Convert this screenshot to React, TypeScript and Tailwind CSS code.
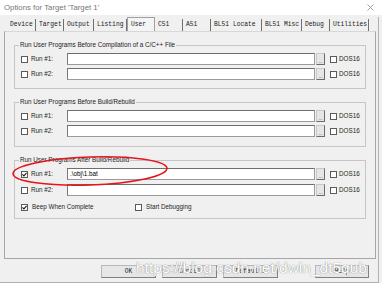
import React from "react";

const sans = "font-['Liberation_Sans',Arial,sans-serif]";
const mono = "font-['Liberation_Mono','Courier_New',monospace]";

const Check = ({ on = false }: { on?: boolean }) => (
  <span className="w-[7px] h-[7px] shrink-0 border border-[#5a5a5a] bg-white flex items-center justify-center">
    {on && (
      <svg width="5" height="5" viewBox="0 0 5 5">
        <path d="M0.4 2.4 L1.9 3.9 L4.6 0.9" fill="none" stroke="#1a1a1a" strokeWidth="1.1" />
      </svg>
    )}
  </span>
);

const RunRow = ({ n, value = "", checked = false }: { n: number; value?: string; checked?: boolean }) => (
  <div className="flex items-center h-[12px] pl-[6px]">
    <Check on={checked} />
    <span className="ml-[3px] w-[36px]">Run #{n}:</span>
    <div className="w-[248px] h-[12px] bg-white border border-[#9a9a9a] border-t-[#6e6e6e] border-l-[#7a7a7a] flex items-center pl-[2px] text-black">
      {value}
    </div>
    <div className="ml-[1px] w-[9px] h-[12px] bg-[#e6e6e6] border border-[#c8c8c8] border-r-[#6a6a6a] border-b-[#6a6a6a] flex items-end justify-center text-[5px] leading-[6px] text-[#333]">
      ...
    </div>
    <span className="ml-[5px]">
      <Check />
    </span>
    <span className="ml-[2px]">DOS16</span>
  </div>
);

const Group = ({ title, children, className }: { title: string; children: React.ReactNode; className: string }) => (
  <fieldset className={`border border-[#c6c6c6] mx-[9px] pt-[4px] ${className}`}>
    <legend className="ml-[4px] px-[1px] leading-[8px] text-[#222]">{title}</legend>
    {children}
  </fieldset>
);

const tabs = [
  { label: "Device", w: "w-[32px] pl-[6px]" },
  { label: "Target", w: "w-[28px] pl-[3px]" },
  { label: "Output", w: "w-[30px] pl-[3px]" },
  { label: "Listing", w: "w-[33px] pl-[3px]" },
  { label: "User", w: "w-[28px] pl-[3px]", active: true },
  { label: "C51", w: "w-[28px] pl-[3px]" },
  { label: "A51", w: "w-[28px] pl-[3px]" },
  { label: "BL51 Locate", w: "w-[51px] pl-[3px]" },
  { label: "BL51 Misc", w: "w-[40px] pl-[3px]" },
  { label: "Debug", w: "w-[28px] pl-[3px]" },
  { label: "Utilities", w: "w-[39px] pl-[3px]" },
];

const Btn = ({ label, className }: { label: string; className: string }) => (
  <div
    className={`h-[13px] bg-[#e6e6e6] border border-[#b8b8b8] border-r-[#808080] border-b-[#808080] flex items-center justify-center ${mono} text-[6.3px] text-[#222] ${className}`}
  >
    {label}
  </div>
);

export default function App() {
  return (
    <div className={`relative w-[382px] h-[283px] overflow-hidden bg-[#f0f0f0] ${sans} text-[6.3px] text-[#1e1e1e]`}>
      {/* title bar */}
      <div className="h-[15px] bg-white flex items-center justify-between pl-[4px] pr-[8px]">
        <span className="text-[7.8px] text-[#777]">Options for Target 'Target 1'</span>
        <svg width="7" height="7" viewBox="0 0 7 7">
          <path d="M0.5 0.5 L6.5 6.5 M6.5 0.5 L0.5 6.5" stroke="#8a8a8a" strokeWidth="0.8" />
        </svg>
      </div>

      <div className="w-[379px] h-[266px] border-r border-b border-[#b0b0b0]">
        {/* tabs */}
        <div className={`mt-[2px] h-[14px] flex items-end pl-[4px] ${mono} text-[6.3px] text-[#1a1a1a]`}>
          {tabs.map((t) =>
            t.active ? (
              <div key={t.label} className={`${t.w} h-[14px] border-l border-r border-t border-[#a0a0a0] bg-[#f4f4f4] flex items-center`}>
                {t.label}
              </div>
            ) : (
              <div key={t.label} className={`${t.w} h-[12px] border-r border-[#6f6f6f] flex items-center`}>
                {t.label}
              </div>
            )
          )}
        </div>

        {/* panel */}
        <div className="ml-[4px] w-[372px] h-[228px] border border-[#a6a6a6] border-t-[#d8d8d8] pt-[9px]">
          <Group title="Run User Programs Before Compilation of a C/C++ File" className="pb-[8px]">
            <div className="flex flex-col gap-[3px]">
              <RunRow n={1} />
              <RunRow n={2} />
            </div>
          </Group>

          <Group title="Run User Programs Before Build/Rebuild" className="mt-[9px] pb-[9px]">
            <div className="flex flex-col gap-[3px]">
              <RunRow n={1} />
              <RunRow n={2} />
            </div>
          </Group>

          <Group title="Run User Programs After Build/Rebuild" className="mt-[9px] pb-[6px]">
            <div className="flex flex-col gap-[4px]">
              <RunRow n={1} value=".\obj\1.bat" checked />
              <RunRow n={2} />
            </div>
            <div className="mt-[6px] h-[10px] flex items-center pl-[6px]">
              <Check on />
              <span className="ml-[4px] w-[103px]">Beep When Complete</span>
              <Check />
              <span className="ml-[4px]">Start Debugging</span>
            </div>
          </Group>
        </div>

        {/* buttons */}
        <div className="mt-[6px] flex">
          <Btn label="OK" className="ml-[101px] w-[55px]" />
          <Btn label="Cancel" className="ml-[6px] w-[55px]" />
          <Btn label="Defaults" className="ml-[6px] w-[55px]" />
          <Btn label="Help" className="ml-[37px] w-[54px]" />
        </div>
      </div>

      {/* red annotation ellipse */}
      <svg className="absolute left-0 top-[148px]" width="182" height="46" viewBox="0 0 182 46">
        <ellipse cx="90" cy="23" rx="77" ry="14" fill="none" stroke="#e4161b" strokeWidth="1.6" transform="rotate(-2 90 23)" />
      </svg>

      {/* watermark */}
      <div className="absolute left-[136px] top-[259px] text-[15.5px] leading-[18px] text-white [text-shadow:0_0_1px_#8e8e8e,0_0_1px_#a0a0a0] whitespace-nowrap">
        https://blog.csdn.net/dwin_dt5qub
      </div>
    </div>
  );
}
